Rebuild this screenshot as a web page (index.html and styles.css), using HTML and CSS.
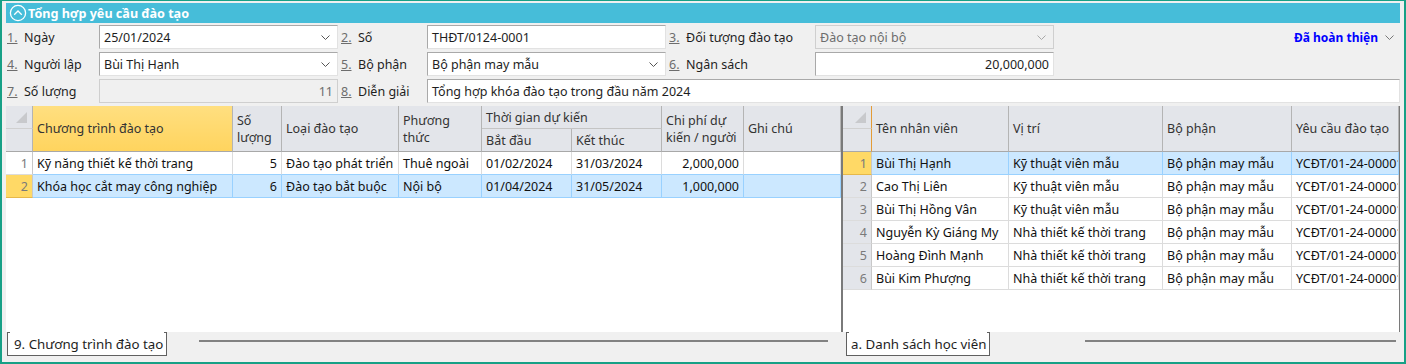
FILE: index.html
```html
<!DOCTYPE html>
<html lang="vi">
<head>
<meta charset="utf-8">
<title>Tổng hợp yêu cầu đào tạo</title>
<link rel="stylesheet" href="styles.css">
</head>
<body>
<div class="frame">
  <div class="title">
    <svg class="title-icon" width="18" height="18" viewBox="0 0 18 18"><circle cx="9" cy="9" r="7.6" fill="none" stroke="#fff" stroke-width="1.3"/><polyline points="5.2,10.8 9,7 12.8,10.8" fill="none" stroke="#fff" stroke-width="1.3"/></svg>
    <span>Tổng hợp yêu cầu đào tạo</span>
  </div>

  <div class="form">
    <div class="lbl first"><span class="num">1.</span>Ngày</div>
    <div class="inp combo"><span>25/01/2024</span><svg class="chev" width="9" height="5" viewBox="0 0 9 5"><polyline points="0.5,0.5 4.5,4.5 8.5,0.5"/></svg></div>
    <div class="lbl"><span class="num">2.</span>Số</div>
    <div class="inp"><span>THĐT/0124-0001</span></div>
    <div class="lbl"><span class="num">3.</span>Đối tượng đào tạo</div>
    <div class="inp combo disabled"><span>Đào tạo nội bộ</span><svg class="chev light" width="9" height="5" viewBox="0 0 9 5"><polyline points="0.5,0.5 4.5,4.5 8.5,0.5"/></svg></div>
    <div class="status"><span>Đã hoàn thiện</span><svg class="chev" width="9" height="5" viewBox="0 0 9 5"><polyline points="0.5,0.5 4.5,4.5 8.5,0.5"/></svg></div>

    <div class="lbl first"><span class="num">4.</span>Người lập</div>
    <div class="inp combo"><span>Bùi Thị Hạnh</span><svg class="chev" width="9" height="5" viewBox="0 0 9 5"><polyline points="0.5,0.5 4.5,4.5 8.5,0.5"/></svg></div>
    <div class="lbl"><span class="num">5.</span>Bộ phận</div>
    <div class="inp combo"><span>Bộ phận may mẫu</span><svg class="chev" width="9" height="5" viewBox="0 0 9 5"><polyline points="0.5,0.5 4.5,4.5 8.5,0.5"/></svg></div>
    <div class="lbl"><span class="num">6.</span>Ngân sách</div>
    <div class="inp right"><span>20,000,000</span></div>
    <div class="empty"></div>

    <div class="lbl first"><span class="num">7.</span>Số lượng</div>
    <div class="inp right disabled qty"><span>11</span></div>
    <div class="lbl"><span class="num">8.</span>Diễn giải</div>
    <div class="inp wide"><span>Tổng hợp khóa đào tạo trong đầu năm 2024</span></div>
  </div>

  <div class="grids">
    <div class="panel left-panel">
      <div class="grid g-left">
        <div class="hc ind-top"><span class="corner"></span></div>
        <div class="hc focus c2 rs2">Chương trình đào tạo</div>
        <div class="hc c3 rs2 two">Số<br>lượng</div>
        <div class="hc c4 rs2">Loại đào tạo</div>
        <div class="hc c5 rs2 two">Phương<br>thức</div>
        <div class="hc c67 top">Thời gian dự kiến</div>
        <div class="hc c8 rs2 two">Chi phí dự<br>kiến / người</div>
        <div class="hc c9 rs2">Ghi chú</div>
        <div class="hc ind-bot"></div>
        <div class="hc c6 bot">Bắt đầu</div>
        <div class="hc c7 bot">Kết thúc</div>

        <div class="ic presel white">1</div>
        <div class="dc presel">Kỹ năng thiết kế thời trang</div>
        <div class="dc presel num-r">5</div>
        <div class="dc presel">Đào tạo phát triển</div>
        <div class="dc presel">Thuê ngoài</div>
        <div class="dc presel">01/02/2024</div>
        <div class="dc presel">31/03/2024</div>
        <div class="dc presel num-r">2,000,000</div>
        <div class="dc presel"></div>

        <div class="ic cur">2</div>
        <div class="dc sel">Khóa học cắt may công nghiệp</div>
        <div class="dc sel num-r">6</div>
        <div class="dc sel">Đào tạo bắt buộc</div>
        <div class="dc sel">Nội bộ</div>
        <div class="dc sel">01/04/2024</div>
        <div class="dc sel">31/05/2024</div>
        <div class="dc sel num-r">1,000,000</div>
        <div class="dc sel"></div>
      </div>
    </div>

    <div class="panel right-panel">
      <div class="grid g-right">
        <div class="hc ind-top orange"><span class="corner"></span></div>
        <div class="hc r2 rs2">Tên nhân viên</div>
        <div class="hc r3 rs2">Vị trí</div>
        <div class="hc r4 rs2">Bộ phận</div>
        <div class="hc r5 rs2">Yêu cầu đào tạo</div>
        <div class="hc ind-bot orange"></div>

        <div class="ic cur">1</div>
        <div class="dc sel">Bùi Thị Hạnh</div>
        <div class="dc sel">Kỹ thuật viên mẫu</div>
        <div class="dc sel">Bộ phận may mẫu</div>
        <div class="dc sel">YCĐT/01-24-00001</div>

        <div class="ic">2</div>
        <div class="dc">Cao Thị Liên</div>
        <div class="dc">Kỹ thuật viên mẫu</div>
        <div class="dc">Bộ phận may mẫu</div>
        <div class="dc">YCĐT/01-24-00001</div>

        <div class="ic">3</div>
        <div class="dc">Bùi Thị Hồng Vân</div>
        <div class="dc">Kỹ thuật viên mẫu</div>
        <div class="dc">Bộ phận may mẫu</div>
        <div class="dc">YCĐT/01-24-00001</div>

        <div class="ic">4</div>
        <div class="dc">Nguyễn Kỳ Giáng My</div>
        <div class="dc">Nhà thiết kế thời trang</div>
        <div class="dc">Bộ phận may mẫu</div>
        <div class="dc">YCĐT/01-24-00001</div>

        <div class="ic">5</div>
        <div class="dc">Hoàng Đình Mạnh</div>
        <div class="dc">Nhà thiết kế thời trang</div>
        <div class="dc">Bộ phận may mẫu</div>
        <div class="dc">YCĐT/01-24-00001</div>

        <div class="ic">6</div>
        <div class="dc">Bùi Kim Phượng</div>
        <div class="dc">Nhà thiết kế thời trang</div>
        <div class="dc">Bộ phận may mẫu</div>
        <div class="dc">YCĐT/01-24-00001</div>
      </div>
    </div>
  </div>

  <div class="tabs">
    <div class="tabzone tz-left">
      <div class="tab">9. Chương trình đào tạo</div>
      <div class="tline"></div>
    </div>
    <div class="tabzone tz-right">
      <div class="tab">a. Danh sách học viên</div>
      <div class="tline"></div>
    </div>
  </div>
</div>
</body>
</html>
```

FILE: styles.css
```css
* { box-sizing: border-box; }
html, body { margin: 0; padding: 0; }
body {
  width: 1406px;
  height: 364px;
  overflow: hidden;
  background: #f0f0f0;
  font-family: "Noto Sans", "Open Sans", sans-serif;
  font-size: 12.5px;
  color: #1e1e1e;
}
.frame {
  width: 1406px;
  height: 364px;
  border: 2px solid #17a086;
  border-top-width: 1px;
  padding: 0 4px;
  display: flex;
  flex-direction: column;
  background: #f0f0f0;
}

/* title bar */
.title {
  margin-top: 2px;
  height: 20px;
  background: #46bdd9;
  color: #fff;
  font-weight: bold;
  font-size: 12.6px;
  display: flex;
  align-items: center;
  padding-left: 3px;
}
.title-icon { margin-right: 1px; }

/* form */
.form {
  margin-top: 2px;
  display: grid;
  grid-template-columns: 93px 239px 89px 239px 149px 239px 1fr;
  grid-template-rows: 24px 24px 24px;
  row-gap: 3px;
}
.lbl {
  display: flex;
  align-items: center;
  padding-left: 3px;
  white-space: nowrap;
  color: #1e1e1e;
}
.lbl.first { padding-left: 1px; }
.num {
  display: inline-block;
  width: 17px;
  color: #6d6d6d;
  text-decoration: underline;
}
.inp {
  position: relative;
  background: #fff;
  border: 1px solid #a9a9a9;
  border-right-color: #e2e2e2;
  border-bottom-color: #e2e2e2;
  display: flex;
  align-items: center;
  padding: 0 4px;
  white-space: nowrap;
  overflow: hidden;
}
.inp.right { justify-content: flex-end; }
.inp.disabled {
  background: #f0f0f0;
  color: #6d6d6d;
  border-color: #cfcfcf;
}
.inp.wide { grid-column: 4 / 8; }
.combo { padding-right: 22px; }
.chev {
  fill: none;
  stroke: #555;
  stroke-width: 1;
}
.combo .chev {
  position: absolute;
  right: 7px;
  top: 9px;
}
.chev.light { stroke: #a8a8a8; }
.status {
  display: flex;
  align-items: center;
  justify-content: flex-end;
  padding-right: 6px;
  color: #0000ff;
  font-weight: bold;
  font-size: 12px;
}
.status .chev { margin-left: 7px; stroke: #777; }

/* grids */
.grids {
  margin-top: 3px;
  height: 226px;
  display: flex;
}
.panel {
  background: #fff;
  height: 226px;
  overflow: hidden;
}
.left-panel {
  width: 837px;
  border-right: 2px solid #7a7a7a;
}
.right-panel {
  width: 557px;
  border-right: 1px solid #7a7a7a;
}
.grid {
  display: grid;
  grid-auto-rows: 23px;
}
.g-left {
  grid-template-columns: 27px 200px 49px 117px 83px 90px 90px 82px 97px;
  grid-template-rows: 23px 23px;
}
.g-right {
  grid-template-columns: 29px 137px 154px 129px 107px;
  grid-template-rows: 23px 23px;
}
.hc, .dc, .ic {
  border-right: 1px solid #dcdcdc;
  border-bottom: 1px solid #dcdcdc;
  white-space: nowrap;
  overflow: hidden;
  display: flex;
  align-items: center;
}
.hc {
  background: #e3e5ea;
  color: #333;
  border-right-color: #b4b4b4;
  padding: 0 4px;
  line-height: 17px;
}
.hc.rs2 {
  grid-row: 1 / 3;
  border-bottom: 1px solid #a8a8a8;
}
.hc.top { grid-column: 6 / 8; grid-row: 1; border-bottom-color: #c4c4c4; }
.hc.bot { grid-row: 2; border-bottom: 1px solid #a8a8a8; }
.c2 { grid-column: 2; }
.c3 { grid-column: 3; }
.c4 { grid-column: 4; }
.c5 { grid-column: 5; }
.c6 { grid-column: 6; }
.c7 { grid-column: 7; }
.c8 { grid-column: 8; }
.c9 { grid-column: 9; }
.r2 { grid-column: 2; }
.r3 { grid-column: 3; }
.r4 { grid-column: 4; }
.r5 { grid-column: 5; }
.hc.two { white-space: normal; }
.hc.focus {
  background: linear-gradient(#ffdf80, #ffd45e);
}
.ind-top {
  grid-column: 1;
  grid-row: 1;
  position: relative;
  border-bottom-color: #d0d0d0;
}
.ind-bot {
  grid-column: 1;
  grid-row: 2;
  border-bottom: 1px solid #a8a8a8;
}
.orange { border-right-color: #e39b36; }
.corner {
  position: absolute;
  right: 5px;
  bottom: 5px;
  width: 0;
  height: 0;
  border-left: 11px solid transparent;
  border-bottom: 11px solid #c8c9cc;
}
.dc {
  padding: 0 4px;
  color: #111;
}
.dc.num-r { justify-content: flex-end; }
.ic {
  justify-content: flex-end;
  padding-right: 4px;
  background: #e3e5ea;
  color: #7a7a7a;
  border-right-color: #c8c8c8;
}
.ic.white { background: #fff; }
.ic.cur {
  background: #ffd966;
  border-bottom-color: #e6b84a;
}
.dc.sel {
  background: #cce8ff;
  border-right-color: #99d1ff;
  border-bottom-color: #99d1ff;
}
.presel { border-bottom-color: #99d1ff; }
.ic.presel { border-bottom-color: #dcdcdc; }

/* tabs */
.tabs {
  height: 29px;
  display: flex;
}
.tabzone {
  display: flex;
  align-items: flex-start;
}
.tz-left { width: 837px; }
.tz-right { width: 557px; }
.tab {
  position: relative;
  height: 24px;
  background: #fff;
  border: 1px solid #606060;
  border-top: none;
  display: flex;
  align-items: center;
  white-space: nowrap;
  font-size: 13.3px;
  color: #1e1e1e;
}
.tab::before, .tab::after {
  content: "";
  position: absolute;
  top: 0;
  width: 3px;
  height: 1px;
  background: #606060;
}
.tab::before { left: -1px; }
.tab::after { right: -1px; }
.tz-left .tab { margin-left: 1px; width: 160px; padding-left: 6px; }
.tz-right .tab { margin-left: 3px; width: 144px; padding-left: 4px; }
.tline {
  flex: 1;
  height: 2px;
  margin-top: 8px;
  background: #828282;
}
.tz-left .tline { margin-left: 32px; margin-right: 15px; }
.tz-right .tline { margin-left: 95px; margin-right: 4px; }
```
